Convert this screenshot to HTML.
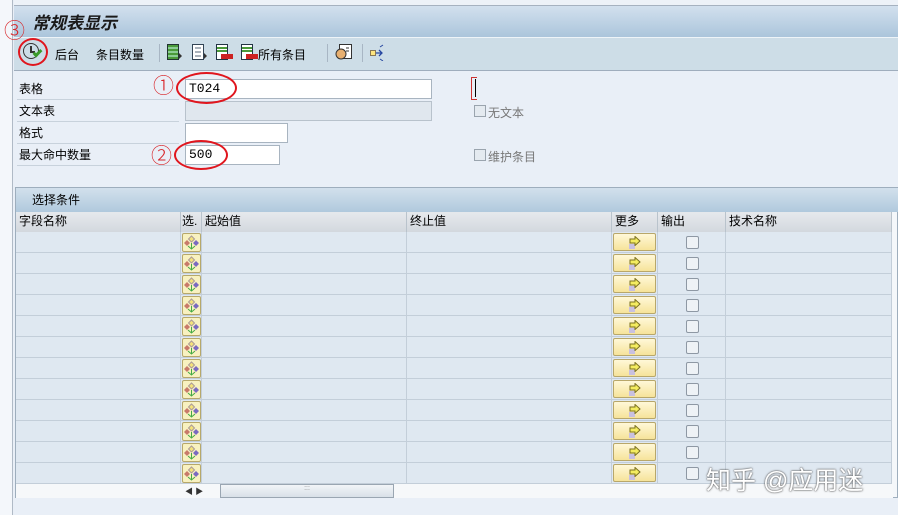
<!DOCTYPE html>
<html><head><meta charset="utf-8"><style>
*{margin:0;padding:0;box-sizing:border-box}
body{width:898px;height:515px;overflow:hidden;background:#e9eff7;font-family:"Liberation Sans","Noto Sans CJK SC",sans-serif;font-size:12px;color:#000;position:relative}
.a{position:absolute}
.lbl{position:absolute;left:17px;width:162px;height:21px;border-bottom:1px solid #c8d2dc;line-height:20px;padding-left:2px}
.inp{position:absolute;background:#fff;border:1px solid #a8b4c0;height:20px;line-height:18px;padding-left:3px;font-family:"Liberation Mono",monospace;font-size:13px}
.ring{position:absolute;border:2.5px solid #e0161e;border-radius:50%}
.num{position:absolute;color:#d8262a;font-size:21px;line-height:21px;font-family:"Noto Sans CJK SC",sans-serif;font-weight:300}
.cell{position:absolute;border-right:1px solid #c3ced9;border-bottom:1px solid #c3ced9;height:21px}
.hd{position:absolute;top:212px;height:20px;line-height:19px;background:linear-gradient(#e6e9ed,#d3d8de);border-right:1px solid #b9c3cc;padding-left:3px}
.sel{position:absolute;left:182px;width:19px;height:19px;background:#f8f1c0;border:1px solid #b7a86a;border-radius:2px}
.more{position:absolute;left:613px;width:43px;height:18px;background:linear-gradient(#fff8d8,#f6e39a);border:1px solid #b8a76a;border-radius:2px}
.cb{position:absolute;left:686px;width:13px;height:13px;border:1px solid #8e98a4;background:#eef2f6;border-radius:2px}
</style></head><body>
<div class="a" style="left:0;top:0;width:13px;height:515px;background:#f4f7fb;border-right:1px solid #b0bac6"></div>
<div class="a" style="left:14px;top:0;width:884px;height:6px;background:#edf2f8;border-bottom:1px solid #a6b2c0"></div>
<div class="a" style="left:14px;top:6px;width:884px;height:31px;background:linear-gradient(#d2e0ee,#abc5db)"></div>
<div class="a" style="left:32px;top:9px;font-size:17px;font-weight:bold;font-style:italic;color:#1a1a1a">常规表显示</div>
<div class="a" style="left:14px;top:37px;width:884px;height:34px;background:#cddde7;border-top:1px solid #eef4f8;border-bottom:1px solid #9fadbd"></div>
<div class="a" style="left:23px;top:43px;width:16px;height:16px;border:1.5px solid #333;border-radius:50%"></div>
<div class="a" style="left:30px;top:46px;width:1.5px;height:6px;background:#333"></div>
<div class="a" style="left:30px;top:51px;width:5px;height:1.5px;background:#333"></div>
<div class="a" style="left:33px;top:50px;width:9px;height:5px;border-left:3px solid #3a9a2a;border-bottom:3px solid #3a9a2a;transform:rotate(-45deg)"></div>
<div class="ring" style="left:18px;top:38px;width:30px;height:28px"></div>
<div class="num" style="left:4px;top:20px">③</div>
<div class="a" style="left:55px;top:46px">后台</div>
<div class="a" style="left:96px;top:46px">条目数量</div>
<div class="a" style="left:159px;top:44px;width:1px;height:18px;background:#a8b6c4"></div>
<svg class="a" style="left:167px;top:44px" width="16" height="17"><rect x="0.5" y="0.5" width="11" height="15" fill="#4a9a3a" stroke="#233"/><path d="M1 4h10M1 8h10M1 12h10" stroke="#cfe" /><path d="M12 9l3 3-3 3z" fill="#333"/></svg>
<svg class="a" style="left:192px;top:44px" width="16" height="17"><rect x="0.5" y="0.5" width="11" height="15" fill="#fff" stroke="#345"/><path d="M3 4h6M3 8h6M3 12h6" stroke="#567"/><path d="M12 9l3 3-3 3z" fill="#333"/></svg>
<svg class="a" style="left:216px;top:44px" width="18" height="17"><rect x="0.5" y="0.5" width="11" height="15" fill="#fff" stroke="#234"/><path d="M1 4h10M1 7h10" stroke="#4a9a3a" stroke-width="2"/><rect x="5" y="10" width="12" height="5" fill="#c22"/></svg>
<svg class="a" style="left:241px;top:44px" width="18" height="17"><rect x="0.5" y="0.5" width="11" height="15" fill="#fff" stroke="#234"/><path d="M1 4h10M1 7h10" stroke="#4a9a3a" stroke-width="2"/><rect x="5" y="10" width="12" height="5" fill="#c22"/></svg>
<div class="a" style="left:258px;top:46px">所有条目</div>
<div class="a" style="left:327px;top:44px;width:1px;height:18px;background:#a8b6c4"></div>
<svg class="a" style="left:335px;top:44px" width="17" height="17"><rect x="4.5" y="0.5" width="12" height="14" fill="#fff" stroke="#333"/><circle cx="6" cy="10" r="5" fill="#e8b070" stroke="#333"/><path d="M11 4h3M11 7h3" stroke="#333"/></svg>
<div class="a" style="left:362px;top:44px;width:1px;height:18px;background:#a8b6c4"></div>
<svg class="a" style="left:369px;top:44px" width="18" height="17"><rect x="1.5" y="6.5" width="5" height="5" fill="#ffe680" stroke="#875"/><path d="M7 9h6M10 6l3 3-3 3" stroke="#2545a0" fill="none" stroke-width="1.3"/><path d="M11 3l3-2M11 15l3 2" stroke="#2545a0"/></svg>

<div class="lbl" style="top:79px">表格</div>
<div class="lbl" style="top:101px">文本表</div>
<div class="lbl" style="top:123px">格式</div>
<div class="lbl" style="top:145px">最大命中数量</div>
<div class="inp" style="left:185px;top:79px;width:247px">T024</div>
<div class="inp" style="left:185px;top:101px;width:247px;background:#e0e7ee;border-color:#b8c2cc"></div>
<div class="inp" style="left:185px;top:123px;width:103px"></div>
<div class="inp" style="left:185px;top:145px;width:95px">500</div>
<div class="ring" style="left:176px;top:72px;width:61px;height:32px"></div>
<div class="num" style="left:153px;top:75px">①</div>
<div class="ring" style="left:174px;top:140px;width:54px;height:30px"></div>
<div class="num" style="left:151px;top:145px">②</div>
<div class="a" style="left:471px;top:77px;width:6px;height:23px;border:1.5px solid #c33;border-right:none"></div>
<div class="a" style="left:475px;top:79px;width:1px;height:18px;background:#000"></div>
<div class="a" style="left:474px;top:105px;width:12px;height:12px;border:1px solid #9aa4ae;background:#e4eaf0"></div>
<div class="a" style="left:488px;top:104px;color:#777">无文本</div>
<div class="a" style="left:474px;top:149px;width:12px;height:12px;border:1px solid #9aa4ae;background:#e4eaf0"></div>
<div class="a" style="left:488px;top:148px;color:#777">维护条目</div>

<div class="a" style="left:15px;top:187px;width:883px;height:311px;border:1px solid #9eaebd;background:#f4f7fa"></div>
<div class="a" style="left:16px;top:188px;width:882px;height:24px;background:linear-gradient(#d2e0ec,#b0c9dd)"></div>
<div class="a" style="left:32px;top:191px">选择条件</div>
<div class="hd" style="left:16px;width:165px">字段名称</div>
<div class="hd" style="left:181px;width:21px;padding-left:1px">选.</div>
<div class="hd" style="left:202px;width:205px">起始值</div>
<div class="hd" style="left:407px;width:205px">终止值</div>
<div class="hd" style="left:612px;width:46px">更多</div>
<div class="hd" style="left:658px;width:68px">输出</div>
<div class="hd" style="left:726px;width:166px">技术名称</div>
<div id="rows"></div>
<script>
var h='',cols=[[16,165],[181,21],[202,205],[407,205],[612,46],[658,68],[726,166]];
for(var i=0;i<12;i++){var t=232+i*21;
for(var c=0;c<7;c++)h+='<div class="cell" style="left:'+cols[c][0]+'px;top:'+t+'px;width:'+cols[c][1]+'px;background:#dfe8f1"></div>';
h+='<div class="sel" style="top:'+(t+1)+'px"><svg width="17" height="17" viewBox="0 0 17 17"><path d="M8.5 2l3 3-3 3-3-3z" fill="#f4e27a" stroke="#a99"/><path d="M4 6l3 3-3 3-3-3z" fill="#c87a6a"/><path d="M13 6l3 3-3 3-3-3z" fill="#7a6ac0"/><path d="M8.5 9v6M5 12l3.5 3 3.5-3" stroke="#4a4" fill="none"/></svg></div>';
h+='<div class="more" style="top:'+(t+1)+'px"><div style="position:absolute;left:15px;top:10px;width:6px;height:5px;background:#c8c0e0"></div><svg style="position:absolute;left:15px;top:2px" width="12" height="10"><path d="M1 3h5V0.5L11 5 6 9.5V7H1z" fill="#f4ec60" stroke="#7a7020"/></svg></div>';
h+='<div class="cb" style="top:'+(t+4)+'px"></div>';}
document.getElementById('rows').innerHTML=h;
</script>
<div class="a" style="left:16px;top:484px;width:877px;height:14px;background:#f6f8fa"></div>
<div class="a" style="left:185px;top:486px;font-size:8px;color:#333">◀&nbsp;▶</div>
<div class="a" style="left:220px;top:484px;width:174px;height:14px;border:1px solid #9aa6b2;background:linear-gradient(#f2f5f8,#d8e0e8);font-size:7px;text-align:center;color:#888">:::</div>
<div class="a" style="left:706px;top:461px;font-size:25px;color:#fff;text-shadow:0 0 2px #555,0 0 1px #555">知乎 @应用迷</div>
</body></html>
